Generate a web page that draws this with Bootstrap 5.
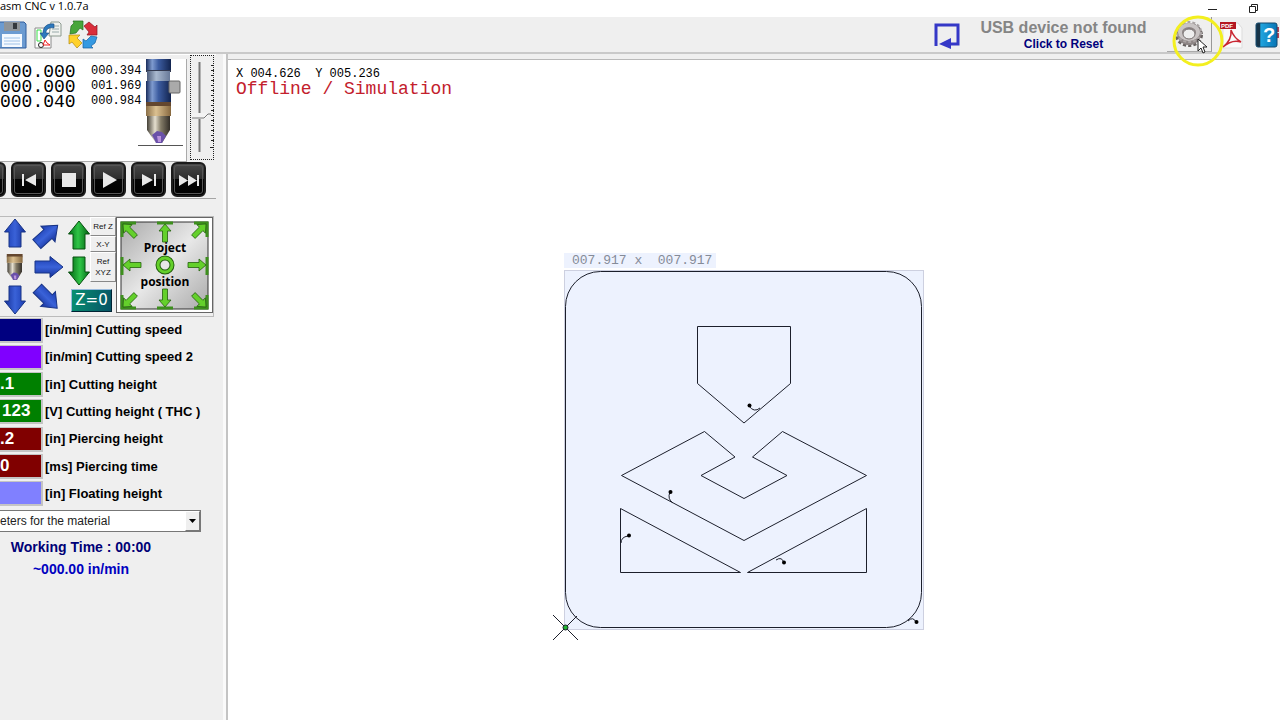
<!DOCTYPE html>
<html lang="en">
<head>
<meta charset="utf-8">
<meta name="viewport" content="width=device-width, initial-scale=1">
<title>asm CNC v 1.0.7a</title>
<link href="https://cdn.jsdelivr.net/npm/bootstrap@5.3.0/dist/css/bootstrap.min.css" rel="stylesheet">
<style>
  body { background: #efefef; color: #000; font-family: "Liberation Sans", Arial, sans-serif; font-size: 14px; line-height: 16px; overflow: hidden; }
  button { border: 0; background: none; padding: 0; color: inherit; }
  svg { display: block; flex-shrink: 0; overflow: visible; }
  .mono { font-family: "Liberation Mono", "Courier New", monospace; }
  .titlebar { height: 17px; background: #fff; font: 11px/12px "Open Sans", sans-serif; }
  .titlebar h1 { font: inherit; margin: 0; }
  .win-controls { gap: 32px; padding-right: 22px; }
  .toolbar { height: 37px; border-bottom: 2px solid #c9c9c9; }
  .file-tools { gap: 7px; }
  .usb-text { width: 207px; line-height: 17px; color: #858585; font-size: 16px; padding-top: 2px; }
  .usb-text small { display: block; font-size: 12px; color: #00007c; font-weight: 700; }
  .gear-btn { width: 45px; height: 35px; border-right: 1px solid #999; border-bottom: 1px solid #aaa; position: relative; padding-left: 8px; }
  .pointer { position: absolute; left: 4px; top: -3px; z-index: 2; }
  .side { width: 228px; border-right: 2px solid #c4c4c4; box-shadow: inset -3px 0 #fafafa; }
  .side-body { width: 216px; border-top: 1px solid #fff; }
  .dro { height: 107px; }
  .readout { width: 187px; height: 103px; margin-top: 4px; background: #fff; border-right: 1px solid #aaa; border-bottom: 1px solid #aaa; overflow: hidden; }
  .dro-big { width: 92px; font-size: 18px; line-height: 15px; padding-top: 6px; }
  .dro-small { width: 47px; font-size: 12px; line-height: 15px; padding-top: 5px; white-space: nowrap; }
  .slider-box { width: 24px; height: 105px; margin-left: 3px; border: 1px dotted #222; position: relative; }
  .slider-box input { position: absolute; inset: 0; width: 22px; height: 103px; opacity: 0; margin: 0; }
  .transport { width: 206px; gap: 5px; overflow: hidden; }
  .media { width: 35px; height: 35px; flex-shrink: 0; border-radius: 6px; border: 2px solid #1b1b1b; background: linear-gradient(#484848, #2c2c2c 48%, #050505 50%, #000); outline: 1px solid #555; outline-offset: -4px; }
  .media svg { margin: auto; }
  .divider { border-bottom: 1px solid #a5a5a5; height: 2px; }
  .jog { height: 101px; margin-top: 17px; width: 214px; border: solid #bbb; border-width: 1px 1px 1px 0; }
  .jog-a { width: 28px; padding: 2px 0 2px 4px; }
  .jog-b { width: 36px; padding: 6px 0 6px 8px; }
  .jog-c { width: 52px; }
  .ref-btn { width: 26px; background: #efefef; border: 1px solid #fff; border-right-color: #888; border-bottom-color: #888; font-size: 8px; line-height: 11px; color: #111; }
  .r1 { height: 19px; } .r2 { height: 16px; } .r3 { height: 30px; }
  .zero-btn { width: 41px; height: 23px; margin-left: 7px; background: linear-gradient(100deg, #079070, #075366); border: 1px solid #023; border-top-color: #9bd; border-left-color: #9bd; color: #fff; font: 15px/19px "DejaVu Sans", sans-serif; }
  .clip { overflow: hidden; }
  .params { height: 190px; align-content: space-between; }
  .param { height: 26px; font-weight: 700; font-size: 13px; gap: 2px; }
  .param input { width: 43px; height: 25px; border: 2px solid #c4c4c4; border-left: 0; border-top-width: 1px; border-radius: 0; padding: 0; color: #fff; font-weight: 700; font-size: 17px; }
  .param input.three { padding-left: 2px; }
  .c-navy { background: #000080; } .c-violet { background: #8000ff; } .c-green { background: #008000; }
  .c-red { background: #800000; } .c-lilac { background: #8080ff; }
  .combo { width: 201px; height: 22px; margin-top: 3px; border: 1px solid #777; border-left: 0; background: #fff; position: relative; }
  .combo select { appearance: none; border: 0; width: 100%; height: 20px; padding: 0; font-size: 12px; background: none; color: #222; }
  .combo-arrow { position: absolute; right: 0; top: 0; width: 15px; height: 20px; background: #efefef; border: 1px solid #fff; border-right-color: #777; border-bottom-color: #777; pointer-events: none; }
  .status { width: 162px; line-height: 22px; margin-top: 4px; font-weight: 700; color: #000076; }
  .rate { color: #0000c0; }
  .stage { background: #fff; margin-top: 5px; border-top: 1px solid #b9b9b9; padding: 8px 8px 0; }
  .coords { font-size: 12px; line-height: 12px; white-space: pre; }
  .mode { font-size: 18px; line-height: 18px; color: #c3202c; }
  .part { width: 360px; margin: 155px auto 0; }
  .part-wrap { padding-right: 20px; }
  .part-size { background: #edf2fe; color: #858b98; font-size: 13px; line-height: 15px; width: 152px; padding-left: 8px; margin-bottom: 2px; white-space: pre; }
</style>
</head>
<body class="d-flex flex-column vh-100">
<svg width="0" height="0" class="position-absolute" aria-hidden="true">
  <defs>
    <linearGradient id="blueG"><stop offset="0" stop-color="#1a3cb0"/><stop offset=".5" stop-color="#3a62d8"/><stop offset="1" stop-color="#142f96"/></linearGradient>
    <linearGradient id="greenG"><stop offset="0" stop-color="#006b16"/><stop offset=".45" stop-color="#2fc446"/><stop offset="1" stop-color="#00600f"/></linearGradient>
    <linearGradient id="steel"><stop offset="0" stop-color="#182c5c"/><stop offset=".25" stop-color="#7f9bcf"/><stop offset=".5" stop-color="#3c5ca0"/><stop offset="1" stop-color="#12244f"/></linearGradient>
    <linearGradient id="ring"><stop offset="0" stop-color="#4d5d7b"/><stop offset=".4" stop-color="#a9b9cf"/><stop offset="1" stop-color="#687a99"/></linearGradient>
    <linearGradient id="brass"><stop offset="0" stop-color="#8a6f48"/><stop offset=".4" stop-color="#dcc191"/><stop offset="1" stop-color="#87683f"/></linearGradient>
    <linearGradient id="nozzle"><stop offset="0" stop-color="#433f35"/><stop offset=".35" stop-color="#e5dfcf"/><stop offset=".6" stop-color="#847c68"/><stop offset="1" stop-color="#332e28"/></linearGradient>
    <linearGradient id="plate" x2="1" y2="1"><stop offset="0" stop-color="#aaa"/><stop offset=".5" stop-color="#e8e8e8"/><stop offset="1" stop-color="#aaa"/></linearGradient>
    <linearGradient id="book"><stop offset="0" stop-color="#173448"/><stop offset=".2" stop-color="#173448"/><stop offset=".22" stop-color="#20a5df"/><stop offset="1" stop-color="#0874b4"/></linearGradient>
    <path id="arr" d="M11 0 21.500 13H17V28H5V13H.5Z"/>
    <path id="pin" d="M0-10 6-3H2.500V8H-2.500V-3H-6Z"/>
    <g id="torch">
      <rect width="25" height="11" fill="url(#steel)"/><rect y="11" width="25" height="2" fill="#333a50"/>
      <rect x="1" y="12" width="23" height="10" fill="url(#ring)"/>
      <rect y="22" width="25" height="21" fill="url(#steel)"/>
      <rect y="43" width="25" height="5" fill="#64472f"/>
      <rect y="47" width="25" height="10" fill="url(#brass)"/>
      <path d="M1 57H24V71L16 84H10L1 71Z" fill="url(#nozzle)"/>
      <path d="M6 76 11 72 16 73 20 77 16 84H10Z" fill="#6a51a9"/><path d="M11 77h4v6h-3z" fill="#b993dc"/>
    </g>
  </defs>
</svg>

<header class="titlebar d-flex justify-content-between">
  <h1>asm CNC v 1.0.7a</h1>
  <div class="win-controls d-flex">
    <button aria-label="Minimize"><svg width="9" height="12"><path d="M0 6.500H9" stroke="#222"/></svg></button>
    <button aria-label="Restore"><svg width="9" height="12" fill="none" stroke="#222"><path d="M.5 3.500H6.500V9.500H.5ZM2.500 3V1.500H8.500V7.500H7"/></svg></button>
  </div>
</header>

<nav class="toolbar d-flex align-items-center flex-shrink-0">
  <div class="file-tools d-flex align-items-center">
    <button aria-label="Save"><svg width="27" height="28"><path d="M-2 1H24L26 3V27H-2Z" fill="#6c9bd1" stroke="#315f9e"/><rect x="4" y="1" width="16" height="9" fill="#8f9499"/><rect x="13" y="2" width="4" height="6" fill="#34383d"/><rect x="2" y="13" width="20" height="13" fill="#f4f9ff"/><path d="M4 17H20M4 20H20M4 23H20" stroke="#9fc2e8"/></svg></button>
    <button aria-label="Import drawing"><svg width="28" height="28"><path d="M1 7H17V27H1Z" fill="#fff" stroke="#8a8a8a"/><path d="M17 1H25L27 3V15H15Z" fill="#f1f3f0" stroke="#8c9a90"/><path d="M18 5H25M18 8H25M18 11H25" stroke="#9aa"/><path d="M3 9H7V20H3Z" fill="none" stroke="#39df48"/><path d="M20 3C12 2 9 7 9 12H6L10 18 15 12H12C12 8 15 6 20 7Z" fill="#2d79bd" stroke="#194b80" stroke-width=".6"/><circle cx="7" cy="24" r="2.500" fill="none" stroke="#222"/><path d="M9 24 11 19 13 22 16 24Z" fill="none" stroke="#e22"/></svg></button>
    <button aria-label="Refresh"><svg width="29" height="28" stroke-width=".7"><path d="M1 13 2 5 5 2 4 0H14V9L11 7 7 12Z" fill="#48a63b" stroke="#246d20"/><path d="M15 5 20 1 26 6 28 4V14H18L20 11Z" fill="#da2e3b" stroke="#8c1520"/><path d="M28 16 26 22 22 25 24 27H14V18L17 20 22 15Z" fill="#3599e1" stroke="#1460a2"/><path d="M13 22 8 27 3 21 0 23V14H11L8 17Z" fill="#ffd12b" stroke="#b28a10"/></svg></button>
  </div>
  <div class="d-flex align-items-center ms-auto">
    <button aria-label="Reconnect"><svg width="26" height="28"><path d="M2 25V4H24V23H17" fill="none" stroke="#3538c7" stroke-width="3"/><path d="M5 23 17 17V28Z" fill="#3538c7"/></svg></button>
    <button class="usb-text fw-bold text-center">USB device not found<small>Click to Reset</small></button>
    <button class="gear-btn" aria-label="Settings" id="settings">
      <svg width="28" height="28"><ellipse cx="14" cy="15" rx="12" ry="10" fill="none" stroke="#66605f" stroke-width="4" stroke-dasharray="3 2"/><ellipse cx="14" cy="14" rx="9" ry="8" fill="none" stroke="#8d8585" stroke-width="6"/><ellipse cx="14" cy="12" rx="9" ry="7" fill="none" stroke="#c9c4c4" stroke-width="4"/><ellipse cx="14" cy="12" rx="12" ry="10" fill="none" stroke="#aaa4a4" stroke-width="2" stroke-dasharray="3 2"/><ellipse cx="14" cy="14" rx="6" ry="5" fill="#eee" stroke="#746d6d"/></svg>
      <svg class="pointer" width="54" height="54"><circle cx="27" cy="27" r="24" fill="none" stroke="#f3ef1f" stroke-width="3"/><path d="M27 25V37L30 34 32 39 34 38 32 33H36Z" fill="#fff" stroke="#222"/></svg>
    </button>
    <button class="ms-2" aria-label="Manual PDF"><svg width="23" height="28"><path d="M3 2H18L22 7V27H3Z" fill="#fafafa" stroke="#ddd"/><rect y="1" width="16" height="7" fill="#b41822"/><text x="1" y="7" font-size="6" font-weight="bold" fill="#fff">PDF</text><path d="M11 9Q14 17 21 21Q12 18 3 26Q12 19 11 9Z" fill="none" stroke="#c92732" stroke-width="1.500"/></svg></button>
    <button class="ms-2 ps-1" aria-label="Help"><svg width="25" height="28"><path d="M21 6H24V11H21ZM21 12H24V17H21Z" fill="#b74152"/><rect x="1" y="2" width="21" height="24" rx="2" fill="url(#book)" stroke="#124b70"/><text x="14" y="21" text-anchor="middle" font-size="20" font-weight="bold" fill="#fff">?</text></svg></button>
  </div>
</nav>

<div class="d-flex flex-grow-1">
  <aside class="side flex-shrink-0">
    <div class="side-body">
      <div class="dro d-flex">
        <div class="readout d-flex">
          <div class="dro-big mono">000.000<br>000.000<br>000.040</div>
          <div class="dro-small mono">000.394<br>001.969<br>000.984</div>
          <svg width="48" height="90" aria-hidden="true"><use href="#torch" x="8"/><rect x="31" y="22" width="11" height="12" rx="1" fill="#aaa" stroke="#666"/><path d="M0 86.500H45" stroke="#555"/></svg>
        </div>
        <div class="slider-box">
          <svg width="22" height="103"><path d="M8.500 6V96" stroke="#777" stroke-width="2"/><path d="M20 9.500H23M20 14.500H23M20 19.500H23M20 24.500H23M20 29.500H23M20 34.500H23M20 39.500H23M20 44.500H23M20 49.500H23M20 54.500H23M20 59.500H23M20 64.500H23M20 69.500H23M20 74.500H23M20 79.500H23M20 84.500H23M19 91.500H23" stroke="#222"/><path d="M1 57H14L18 59 14 63H1Z" fill="#f3f3f3"/><path d="M1 62H13L17 58H20" fill="none" stroke="#777"/></svg>
          <input type="range" aria-label="Speed override">
        </div>
      </div>
      <div class="transport d-flex justify-content-end">
        <button class="media" aria-label="First"></button>
        <button class="media" aria-label="Previous"><svg width="16" height="16" fill="#e8e8e8"><path d="M1 2H3V14H1ZM15 2V14L4 8Z"/></svg></button>
        <button class="media" aria-label="Stop"><svg width="16" height="16"><path d="M1 1H15V15H1Z" fill="#e8e8e8"/></svg></button>
        <button class="media" aria-label="Play"><svg width="16" height="18"><path d="M2 1 16 9 2 17Z" fill="#e8e8e8"/></svg></button>
        <button class="media" aria-label="Next"><svg width="16" height="16" fill="#e8e8e8"><path d="M13 2H15V14H13ZM1 2V14L12 8Z"/></svg></button>
        <button class="media" aria-label="Last"><svg width="20" height="16" fill="#e8e8e8"><path d="M18 3H20V14H18ZM0 3V14L9 8.500ZM9 3V14L18 8.500Z"/></svg></button>
      </div>
      <div class="divider"></div>

      <section class="jog d-flex align-items-stretch" aria-label="Jog">
        <div class="jog-a d-flex flex-column justify-content-between">
          <button aria-label="Y plus"><svg width="22" height="28"><use href="#arr" fill="url(#blueG)" stroke="#183486"/></svg></button>
          <svg class="clip" width="22" height="26" viewBox="-4 43 34 41" aria-hidden="true"><use href="#torch"/></svg>
          <button aria-label="Y minus"><svg width="22" height="28"><use href="#arr" fill="url(#blueG)" stroke="#183486" transform="rotate(180 11 14)"/></svg></button>
        </div>
        <div class="jog-b d-flex flex-column justify-content-between">
          <button aria-label="X and Y plus"><svg width="26" height="22"><use href="#arr" fill="url(#blueG)" stroke="#183486" transform="translate(1 -3) rotate(48 11 14) translate(0 1)"/></svg></button>
          <button aria-label="X plus"><svg width="26" height="22"><use href="#arr" fill="url(#blueG)" stroke="#183486" transform="translate(2 -3) rotate(90 11 14)"/></svg></button>
          <button aria-label="X plus, Y minus"><svg width="26" height="22"><use href="#arr" fill="url(#blueG)" stroke="#183486" transform="translate(1 -3) rotate(135 11 14) translate(0 1)"/></svg></button>
        </div>
        <div class="jog-c d-flex flex-column">
          <div class="d-flex">
            <div class="d-flex flex-column gap-2 ps-1 pt-1">
              <button aria-label="Z up"><svg width="22" height="28"><use href="#arr" fill="url(#greenG)" stroke="#07500f"/></svg></button>
              <button aria-label="Z down"><svg width="22" height="28"><use href="#arr" fill="url(#greenG)" stroke="#07500f" transform="rotate(180 11 14)"/></svg></button>
            </div>
            <div class="d-flex flex-column">
              <button class="ref-btn r1">Ref Z</button>
              <button class="ref-btn r2">X-Y</button>
              <button class="ref-btn r3">Ref<br>XYZ</button>
            </div>
          </div>
          <button class="zero-btn mt-1">Z=0</button>
        </div>
        <button class="ms-auto align-self-start" aria-label="Project position">
          <svg width="97" height="97">
            <rect x=".5" y=".5" width="96" height="95" fill="#fff" stroke="#666"/>
            <rect x="5" y="5" width="87" height="87" fill="url(#plate)" stroke="#333"/>
            <path d="M6 20V6H20M41 6H57M78 6H91V20M91 40V58M91 78V91H78M57 91H41M20 91H6V78M6 58V40" fill="none" stroke="#3d8f1d" stroke-width="3"/>
            <g fill="#64d02b" stroke="#24610e" stroke-width=".8">
              <use href="#pin" x="49" y="17"/><use href="#pin" transform="translate(49 80) rotate(180)"/>
              <use href="#pin" transform="translate(17 48) rotate(-90)"/><use href="#pin" transform="translate(80 48) rotate(90)"/>
              <use href="#pin" transform="translate(14 14) rotate(-45)"/><use href="#pin" transform="translate(83 14) rotate(45)"/>
              <use href="#pin" transform="translate(14 83) rotate(-135)"/><use href="#pin" transform="translate(83 83) rotate(135)"/>
            </g>
            <circle cx="49" cy="48" r="7" fill="none" stroke="#24610e" stroke-width="5"/><circle cx="49" cy="48" r="7" fill="none" stroke="#64d02b" stroke-width="3"/>
            <g font-family="Open Sans, sans-serif" font-size="12" font-weight="bold" text-anchor="middle" fill="#000"><text x="49" y="35">Project</text><text x="49" y="69">position</text></g>
          </svg>
        </button>
      </section>

      <div class="params d-grid">
        <div class="param d-flex align-items-center"><input id="p1" class="c-navy"><label for="p1">[in/min] Cutting speed</label></div>
        <div class="param d-flex align-items-center"><input id="p2" class="c-violet"><label for="p2">[in/min] Cutting speed 2</label></div>
        <div class="param d-flex align-items-center"><input id="p3" class="c-green" value=".1"><label for="p3">[in] Cutting height</label></div>
        <div class="param d-flex align-items-center"><input id="p4" class="c-green three" value="123"><label for="p4">[V] Cutting height ( THC )</label></div>
        <div class="param d-flex align-items-center"><input id="p5" class="c-red" value=".2"><label for="p5">[in] Piercing height</label></div>
        <div class="param d-flex align-items-center"><input id="p6" class="c-red" value="0"><label for="p6">[ms] Piercing time</label></div>
        <div class="param d-flex align-items-center"><input id="p7" class="c-lilac"><label for="p7">[in] Floating height</label></div>
      </div>

      <div class="combo">
        <select aria-label="Parameters for the material"><option>eters for the material</option></select>
        <span class="combo-arrow"><svg width="13" height="18"><path d="M3 7H10L6.500 11Z"/></svg></span>
      </div>
      <div class="status text-center">Working Time : 00:00<div class="rate">~000.00 in/min</div></div>
    </div>
  </aside>

  <main class="stage flex-grow-1">
    <div class="coords mono">X 004.626  Y 005.236</div>
    <div class="mode mono">Offline / Simulation</div>
    <div class="part-wrap">
      <figure class="part">
        <figcaption class="part-size mono">007.917 x  007.917</figcaption>
        <svg width="360" height="360" viewBox="564 270 360 360" fill="none" stroke="#1c1f2b" role="img" aria-label="Cutting paths">
          <rect x="564.500" y="270.500" width="359" height="359" fill="#edf2fe" stroke="#cdd0e0"/>
          <rect x="565.500" y="271.500" width="356" height="356" rx="35"/>
          <path d="M697.500 326.500H790.500V383.500L744 423 697.500 383.500Z"/>
          <path d="M704.500 431.500 735 457 701 475.500 744 498.500 787 475.500 752.500 457 782.500 431.500 866.500 475.500 744 540.500 621.500 475.500Z"/>
          <path d="M620.500 508.500V572.500H740.500ZM866.500 508.500V572.500H747.500Z"/>
          <path d="M749 406Q754 413 760 408M670 492Q667 499 673 503M628 536Q621 537 621 543M776 560Q782 556 784 563M908 621Q913 616 916 622"/>
          <g fill="#000" stroke="none"><circle cx="749.500" cy="405.500" r="2"/><circle cx="670.500" cy="492" r="2"/><circle cx="629" cy="535.500" r="2"/><circle cx="784" cy="562.500" r="2"/><circle cx="916.500" cy="622" r="2"/></g>
          <path d="M553 615 578 640M553 640 577 616"/><circle cx="565.500" cy="627.500" r="2.500" fill="#21b531"/>
        </svg>
      </figure>
    </div>
  </main>
</div>
<script src="https://cdn.jsdelivr.net/npm/bootstrap@5.3.0/dist/js/bootstrap.bundle.min.js"></script>
</body>
</html>
